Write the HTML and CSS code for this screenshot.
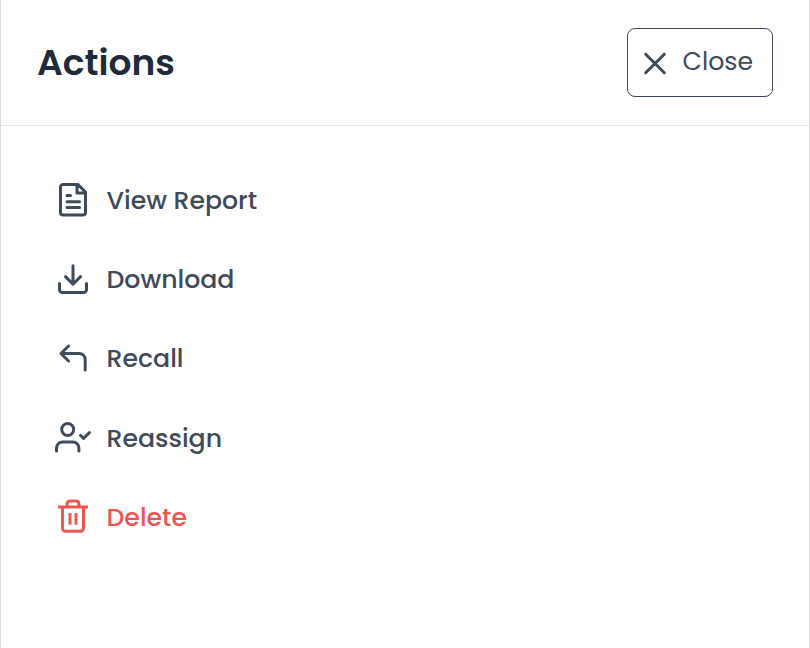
FILE: index.html
```
<!DOCTYPE html>
<html lang="en">
<head>
  <meta charset="utf-8">
  <title>Actions</title>
  <link rel="stylesheet" href="styles.css">
</head>
<body>
  <div class="panel">
    <header class="panel-header">
      <h1 class="title">Actions</h1>
      <button class="close-button" type="button">
        <svg class="close-icon" viewBox="0 0 24 24"><path d="M2.7 3.2l18.6 18.6M21.3 3.2l-18.6 18.6"/></svg>
        <span class="close-label">Close</span>
      </button>
    </header>
    <ul class="actions">
      <li class="action">
        <svg class="icon" viewBox="0 0 36 36"><path d="M23 2.6H8a2.5 2.5 0 0 0-2.5 2.5V30.5A2.5 2.5 0 0 0 8 33h20a2.5 2.5 0 0 0 2.5-2.5V10zM22 2.6v8.4h8.5M12 13.5h3.5M12 19.8h12.5M12 25.6h12.5"/></svg>
        <span class="label">View Report</span>
      </li>
      <li class="action">
        <svg class="icon" viewBox="0 0 36 36"><path d="M18 4.7v18.5M10.5 15.6l7.5 7.6 7.5-7.6M4.5 22.6v6a3 3 0 0 0 3 3h21a3 3 0 0 0 3-3v-6"/></svg>
        <span class="label">Download</span>
      </li>
      <li class="action">
        <svg class="icon" viewBox="0 0 36 36"><path d="M13.5 6L6 13.5l7.5 7.5M6 13.5h18.2a6 6 0 0 1 6 6V30"/></svg>
        <span class="label">Recall</span>
      </li>
      <li class="action">
        <svg class="icon" viewBox="0 0 36 36"><circle cx="12.7" cy="9.5" r="6"/><path d="M1.5 31v-3a6 6 0 0 1 6-6h10.4a6 6 0 0 1 6 6v3M25.5 15.3l3.1 3.1 5.9-5.9"/></svg>
        <span class="label">Reassign</span>
      </li>
      <li class="action danger">
        <svg class="icon" viewBox="0 0 36 36"><path class="square" d="M3 8h30M15 14v11.8M21 14v11.8"/><path d="M12 7.5V5a3 3 0 0 1 3-3h6a3 3 0 0 1 3 3V7.5M7.5 8.5v20.8a3 3 0 0 0 3 3h15a3 3 0 0 0 3-3V8.5"/></svg>
        <span class="label">Delete</span>
      </li>
    </ul>
  </div>
</body>
</html>
```

FILE: styles.css
```
* {
  box-sizing: border-box;
}

body {
  margin: 0;
  font-family: Poppins, Inter, sans-serif;
  color: #3f4a5a;
  background: #fff;
}

.panel {
  height: 648px;
  border-left: 1px solid #dcdcde;
  border-right: 1px solid #dcdcde;
}

.panel-header {
  display: flex;
  align-items: center;
  justify-content: space-between;
  height: 126px;
  padding: 0 36px;
  border-bottom: 1px solid #e5e7eb;
}

.title {
  margin: 0;
  font-size: 36px;
  line-height: 54px;
  font-weight: 600;
  color: #202b3a;
}

.close-button {
  display: flex;
  align-items: center;
  gap: 15.5px;
  width: 146px;
  height: 69px;
  padding: 0 0 0 15px;
  border: 1px solid #3f4a5a;
  border-radius: 8px;
  background: #fff;
  color: #3f4a5a;
  font-family: inherit;
  font-size: 25.2px;
}

.close-icon {
  width: 24px;
  height: 24px;
  margin-top: 1px;
  flex: none;
}

.close-label {
  margin-top: -1px;
}

.actions {
  list-style: none;
  margin: 0;
  padding: 34.5px 54px;
}

.action {
  display: flex;
  align-items: center;
  gap: 15.5px;
  height: 79.2px;
}

.icon {
  width: 36px;
  height: 36px;
  flex: none;
  overflow: visible;
}

.icon,
.close-icon {
  fill: none;
  stroke: currentColor;
  stroke-width: 3;
  stroke-linecap: round;
  stroke-linejoin: round;
}

.icon .square {
  stroke-linecap: butt;
}

.label {
  margin-top: 2px;
  font-size: 25.2px;
  font-weight: 500;
}

.danger {
  color: #ef5650;
}
```
